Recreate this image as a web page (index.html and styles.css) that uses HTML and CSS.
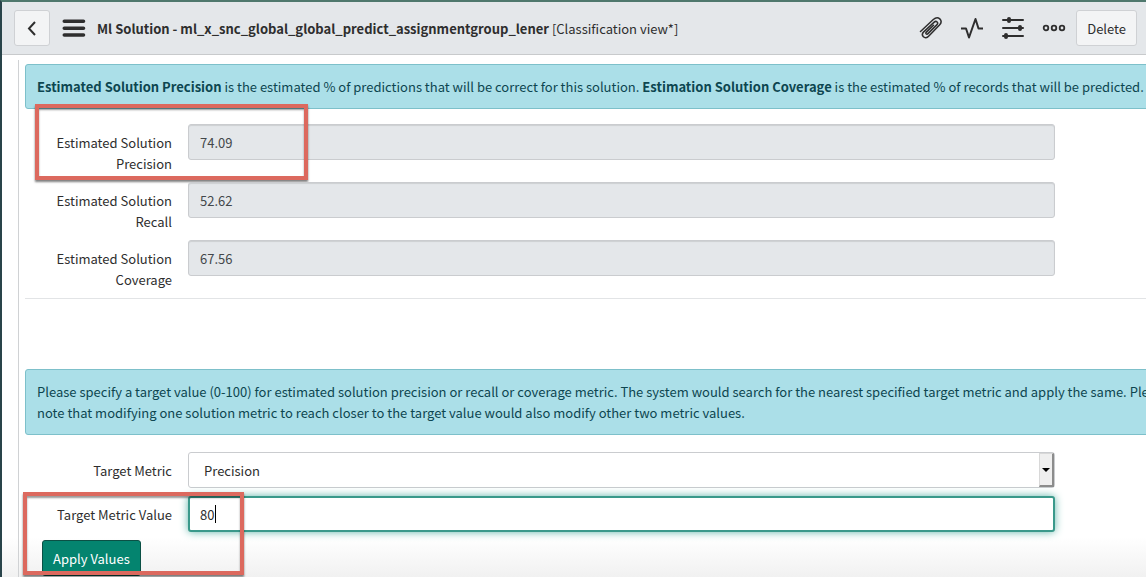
FILE: index.html
```html
<!DOCTYPE html>
<html lang="en">
<head>
    <meta charset="UTF-8">
    <meta name="viewport" content="width=device-width, initial-scale=1.0">
    <title>Ml Solution</title>
    <link rel="stylesheet" href="styles.css">
</head>
<body>
    <header class="header">
        <button class="button back-button" aria-label="Back">
            <svg width="12" height="18" viewBox="0 0 12 18" fill="none" stroke="currentColor" stroke-width="2"><path d="M9 3L3 9.500L9 16"/></svg>
        </button>
        <button class="icon-button menu-button" aria-label="Menu">
            <svg width="24" height="18" viewBox="0 0 24 18" fill="none" stroke="currentColor" stroke-width="3.600" stroke-linecap="round"><path d="M2.300 2.300H21.500M2.300 9.200H21.500M2.300 16H21.500"/></svg>
        </button>
        <h1 class="title"><strong>Ml Solution - ml_x_snc_global_global_predict_assignmentgroup_lener</strong> [Classification view*]</h1>
        <div class="actions">
            <button class="icon-button" aria-label="Attachments">
                <svg width="24" height="24" viewBox="0 0 24 24" fill="none" stroke="currentColor" stroke-width="1.500" stroke-linecap="round" stroke-linejoin="round"><path d="M1.500 15.500L14.300 3.500C16.500 1.500 19 1.200 20.800 2.900C22.600 4.700 22.400 7 20.500 9L9.600 20.300C8 22 5.800 22.200 4.400 20.800C3 19.400 3.100 17.500 4.700 15.900L15.200 6.100C16.200 5.200 17.300 5.200 18.100 6C18.900 6.800 18.800 7.900 17.800 8.900L9 17.600C8.300 18.300 7.600 18.300 7.100 17.800C6.700 17.300 6.800 16.700 7.400 16.100L14.500 9.300"/></svg>
            </button>
            <button class="icon-button" aria-label="Activity">
                <svg width="24" height="24" viewBox="0 0 24 24" fill="none" stroke="currentColor" stroke-width="2" stroke-linejoin="round"><path d="M1 12.500H6L9 21.500L15.500 3L18.500 12.500H23"/></svg>
            </button>
            <button class="icon-button" aria-label="Personalize form">
                <svg width="24" height="24" viewBox="0 0 24 24" fill="none" stroke="currentColor" stroke-width="2" stroke-linecap="round"><path d="M2 4H22M2 12H22M2 20H22"/><path d="M8 3V5M19 11V13M5 19V21" stroke-width="4"/></svg>
            </button>
            <button class="icon-button" aria-label="More options">
                <svg width="24" height="24" viewBox="0 0 24 24" fill="none" stroke="currentColor" stroke-width="1.800"><circle cx="4" cy="12" r="2.300"/><circle cx="12" cy="12" r="2.300"/><circle cx="20" cy="12" r="2.300"/></svg>
            </button>
            <button class="button">Delete</button>
        </div>
    </header>

    <main class="content">
        <div class="alert">
            <strong>Estimated Solution Precision</strong> is the estimated % of predictions that will be correct for this solution. <strong>Estimation Solution Coverage</strong> is the estimated % of records that will be predicted.
        </div>
        <section class="metrics">
            <div class="form-row">
                <label for="precision">Estimated Solution Precision</label>
                <input id="precision" class="form-control" type="text" value="74.09" readonly>
                <div class="highlight highlight-precision"></div>
            </div>
            <div class="form-row">
                <label for="recall">Estimated Solution Recall</label>
                <input id="recall" class="form-control" type="text" value="52.62" readonly>
            </div>
            <div class="form-row">
                <label for="coverage">Estimated Solution Coverage</label>
                <input id="coverage" class="form-control" type="text" value="67.56" readonly>
            </div>
        </section>

        <div class="alert">
            Please specify a target value (0-100) for estimated solution precision or recall or coverage metric. The system would search for the nearest specified target metric and apply the same. Please note that modifying one solution metric to reach closer to the target value would also modify other two metric values.
        </div>
        <form class="target">
            <div class="form-row">
                <label for="targetMetric">Target Metric</label>
                <div class="select-wrap">
                    <select id="targetMetric" class="form-control">
                        <option>Precision</option>
                        <option>Recall</option>
                        <option>Coverage</option>
                    </select>
                    <span class="select-arrow"></span>
                </div>
            </div>
            <div class="target-value">
                <div class="form-row">
                    <label for="targetValue">Target Metric Value</label>
                    <div class="input-wrap">
                        <input id="targetValue" class="form-control focused" type="text" value="80">
                        <span class="caret"></span>
                    </div>
                </div>
                <button type="button" class="button primary">Apply Values</button>
                <div class="highlight highlight-target"></div>
            </div>
        </form>
    </main>
</body>
</html>
```
FILE: styles.css
```css
* {
    box-sizing: border-box;
}
body {
    margin: 0;
    min-height: 100vh;
    display: flex;
    flex-direction: column;
    overflow: hidden;
    border-top: 2px solid #4f786d;
    border-left: 2px solid #29444a;
    background: #fff linear-gradient(#fff, #f1f1f1) bottom / 100% 40px no-repeat;
    color: #2e2e2e;
    font-family: "Noto Sans CJK SC", "Open Sans", sans-serif;
    font-size: 13px;
    line-height: 21px;
}
button,
input,
select {
    font: inherit;
    color: inherit;
}

/* Header */
.header {
    display: flex;
    align-items: center;
    height: 53px;
    padding: 0 9px 0 12px;
    background-color: #e4e7ea;
    border-bottom: 1px solid #c8cacc;
}
.title {
    flex: 1;
    margin: 0 0 0 11px;
    font-size: 13px;
    font-weight: 400;
    white-space: nowrap;
}
.actions {
    display: flex;
    align-items: center;
    gap: 17px;
}
.button {
    height: 36px;
    padding: 0 10px;
    background-color: #f3f4f5;
    border: 1px solid #cfd1d4;
    border-radius: 3px;
    cursor: pointer;
}
.actions .button {
    margin-left: -7px;
}
.icon-button {
    display: flex;
    padding: 0;
    background: none;
    border: none;
    cursor: pointer;
}
.back-button {
    display: flex;
    align-items: center;
    justify-content: center;
    width: 36px;
    padding: 0;
}
.menu-button {
    margin-left: 12px;
}

/* Form content */
.content {
    flex: 1;
    margin: 5px 0 0 16px;
    padding: 4px 0 0 6px;
    border-left: 1px solid #d0d2d4;
}
.alert {
    margin-right: -40px;
    padding: 11px;
    background-color: #abdfe8;
    border: 1px solid #7dc0ca;
    border-radius: 3px;
    color: #0d4650;
}
.metrics {
    margin-bottom: 70px;
    padding-top: 15px;
    border-bottom: 1px solid #e2e4e6;
}
.form-row {
    position: relative;
    display: grid;
    grid-template-columns: 147px 1fr;
    column-gap: 16px;
    align-items: start;
    margin-bottom: 8px;
    padding-right: 91px;
}
.form-row label {
    padding: 8px 0 0 20px;
    text-align: right;
}
.form-control {
    display: block;
    width: 100%;
    height: 36px;
    padding: 0 11px;
    background-color: #fff;
    border: 1px solid #cacccf;
    border-radius: 3px;
    outline: none;
}
.form-control[readonly] {
    background-color: #e4e7ea;
    box-shadow: inset 0 1px 1px rgba(0, 0, 0, 0.1);
    color: #43474a;
}
.form-control.focused {
    border: 2px solid #3a998b;
    padding: 0 10px;
    box-shadow: 0 0 8px #5fb5a9;
}
.target {
    padding-top: 17px;
}
.select-wrap,
.input-wrap {
    position: relative;
}
select.form-control {
    padding: 0 30px 0 15px;
    appearance: none;
}
.select-arrow {
    position: absolute;
    top: 1px;
    right: 1px;
    width: 15px;
    height: 34px;
    background-color: #efefef;
    border: 1px solid #d8d8d8;
    border-right: 2px solid #8c8c8c;
    border-bottom: 2px solid #8c8c8c;
    pointer-events: none;
}
.select-arrow::after {
    content: "";
    position: absolute;
    top: 14px;
    left: 2px;
    border: 4px solid transparent;
    border-top-color: #000;
    border-bottom: none;
}
.caret {
    position: absolute;
    top: 9px;
    left: 27px;
    width: 1px;
    height: 18px;
    background-color: #000;
}
.target-value {
    position: relative;
}
.primary {
    display: block;
    margin-left: 17px;
    background-color: #04846f;
    border-color: #0b5045;
    color: #fff;
}

/* Callout frames */
.highlight {
    position: absolute;
    border: 4px solid #dc695e;
    box-shadow: 0 2px 2px rgba(0, 0, 0, 0.5), inset 0 2px 2px rgba(0, 0, 0, 0.4);
    pointer-events: none;
}
.highlight-precision {
    top: -20px;
    left: 10px;
    width: 273px;
    height: 76px;
}
.highlight-target {
    top: -4px;
    left: -2px;
    width: 221px;
    height: 83px;
}
```
